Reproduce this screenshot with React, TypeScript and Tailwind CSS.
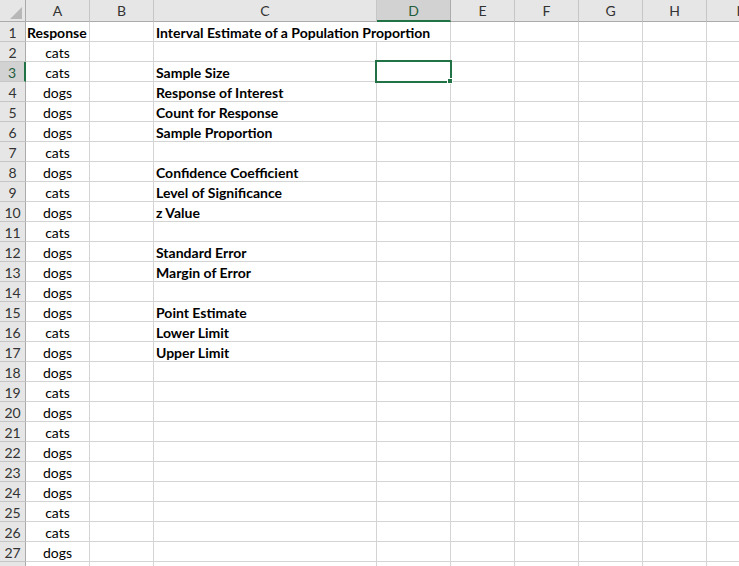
import React from 'react';

const columns = ['A', 'B', 'C', 'D', 'E', 'F', 'G', 'H', 'I'];

const colA: Record<number, string> = {
  2: 'cats', 3: 'cats', 4: 'dogs', 5: 'dogs', 6: 'dogs', 7: 'cats', 8: 'dogs', 9: 'cats',
  10: 'dogs', 11: 'cats', 12: 'dogs', 13: 'dogs', 14: 'dogs', 15: 'dogs', 16: 'cats',
  17: 'dogs', 18: 'dogs', 19: 'cats', 20: 'dogs', 21: 'cats', 22: 'dogs', 23: 'dogs',
  24: 'dogs', 25: 'cats', 26: 'cats', 27: 'dogs',
};

const colC: Record<number, string> = {
  3: 'Sample Size',
  4: 'Response of Interest',
  5: 'Count for Response',
  6: 'Sample Proportion',
  8: 'Confidence Coefficient',
  9: 'Level of Significance',
  10: 'z Value',
  12: 'Standard Error',
  13: 'Margin of Error',
  15: 'Point Estimate',
  16: 'Lower Limit',
  17: 'Upper Limit',
};

const rows = Array.from({ length: 28 }, (_, i) => i + 1);

const cell = 'h-[20px] border-r border-b border-[#d4d4d4] leading-[21px] whitespace-nowrap';

export default function App() {
  return (
    <div
      className="w-[739px] h-[566px] overflow-hidden bg-white text-[14px] text-black"
      style={{ fontFamily: 'Lato, "Open Sans", sans-serif' }}
    >
      <div className="grid w-[771px] grid-cols-[26px_64px_64px_223px_74px_64px_64px_64px_64px_64px]">
        {/* Header row */}
        <div className="relative h-[22px] bg-[#e6e6e6] border-r border-b border-[#ababab]">
          <div className="absolute left-[10px] top-[7px] w-0 h-0 border-l-[12px] border-l-transparent border-b-[12px] border-b-[#b7b7b7]" />
        </div>
        {columns.map((c) => (
          <div
            key={c}
            className={
              c === 'D'
                ? 'h-[22px] bg-[#d2d2d2] border-r border-[#ababab] border-b-2 border-b-[#217346] text-center leading-[22px] text-[#1f5d3b]'
                : 'h-[22px] bg-[#e6e6e6] border-r border-b border-r-[#c6c6c6] border-b-[#ababab] text-center leading-[22px] text-[#333]'
            }
          >
            {c}
          </div>
        ))}

        {rows.map((r) => (
          <React.Fragment key={r}>
            <div
              className={
                r === 3
                  ? 'h-[20px] bg-[#d2d2d2] border-b border-b-[#c6c6c6] border-r-2 border-r-[#217346] text-center leading-[21px] text-[#1f5d3b]'
                  : 'h-[20px] bg-[#e6e6e6] border-b border-b-[#c6c6c6] border-r border-r-[#ababab] text-center leading-[21px] text-[#333]'
              }
            >
              {r < 28 ? r : ''}
            </div>
            {/* A */}
            {r === 1 ? (
              <div className={`${cell} pl-[1px] font-bold`}>Response</div>
            ) : (
              <div className={`${cell} text-center`}>{colA[r] ?? ''}</div>
            )}
            {/* B */}
            <div className={cell} />
            {/* C */}
            {r === 1 ? (
              <div className={`${cell} col-span-2 pl-[2px] font-bold`}>
                Interval Estimate of a Population Proportion
              </div>
            ) : (
              <div className={`${cell} pl-[2px] font-bold`}>{colC[r] ?? ''}</div>
            )}
            {/* D */}
            {r !== 1 &&
              (r === 3 ? (
                <div className={`${cell} relative`}>
                  <div className="absolute -left-[2px] -top-[2px] w-[77px] h-[23px] border-2 border-[#217346]" />
                  <div className="absolute -right-[3px] -bottom-[3px] w-[6px] h-[6px] bg-[#217346] border border-white" />
                </div>
              ) : (
                <div className={cell} />
              ))}
            {/* E-I */}
            <div className={cell} />
            <div className={cell} />
            <div className={cell} />
            <div className={cell} />
            <div className={cell} />
          </React.Fragment>
        ))}
      </div>
    </div>
  );
}
